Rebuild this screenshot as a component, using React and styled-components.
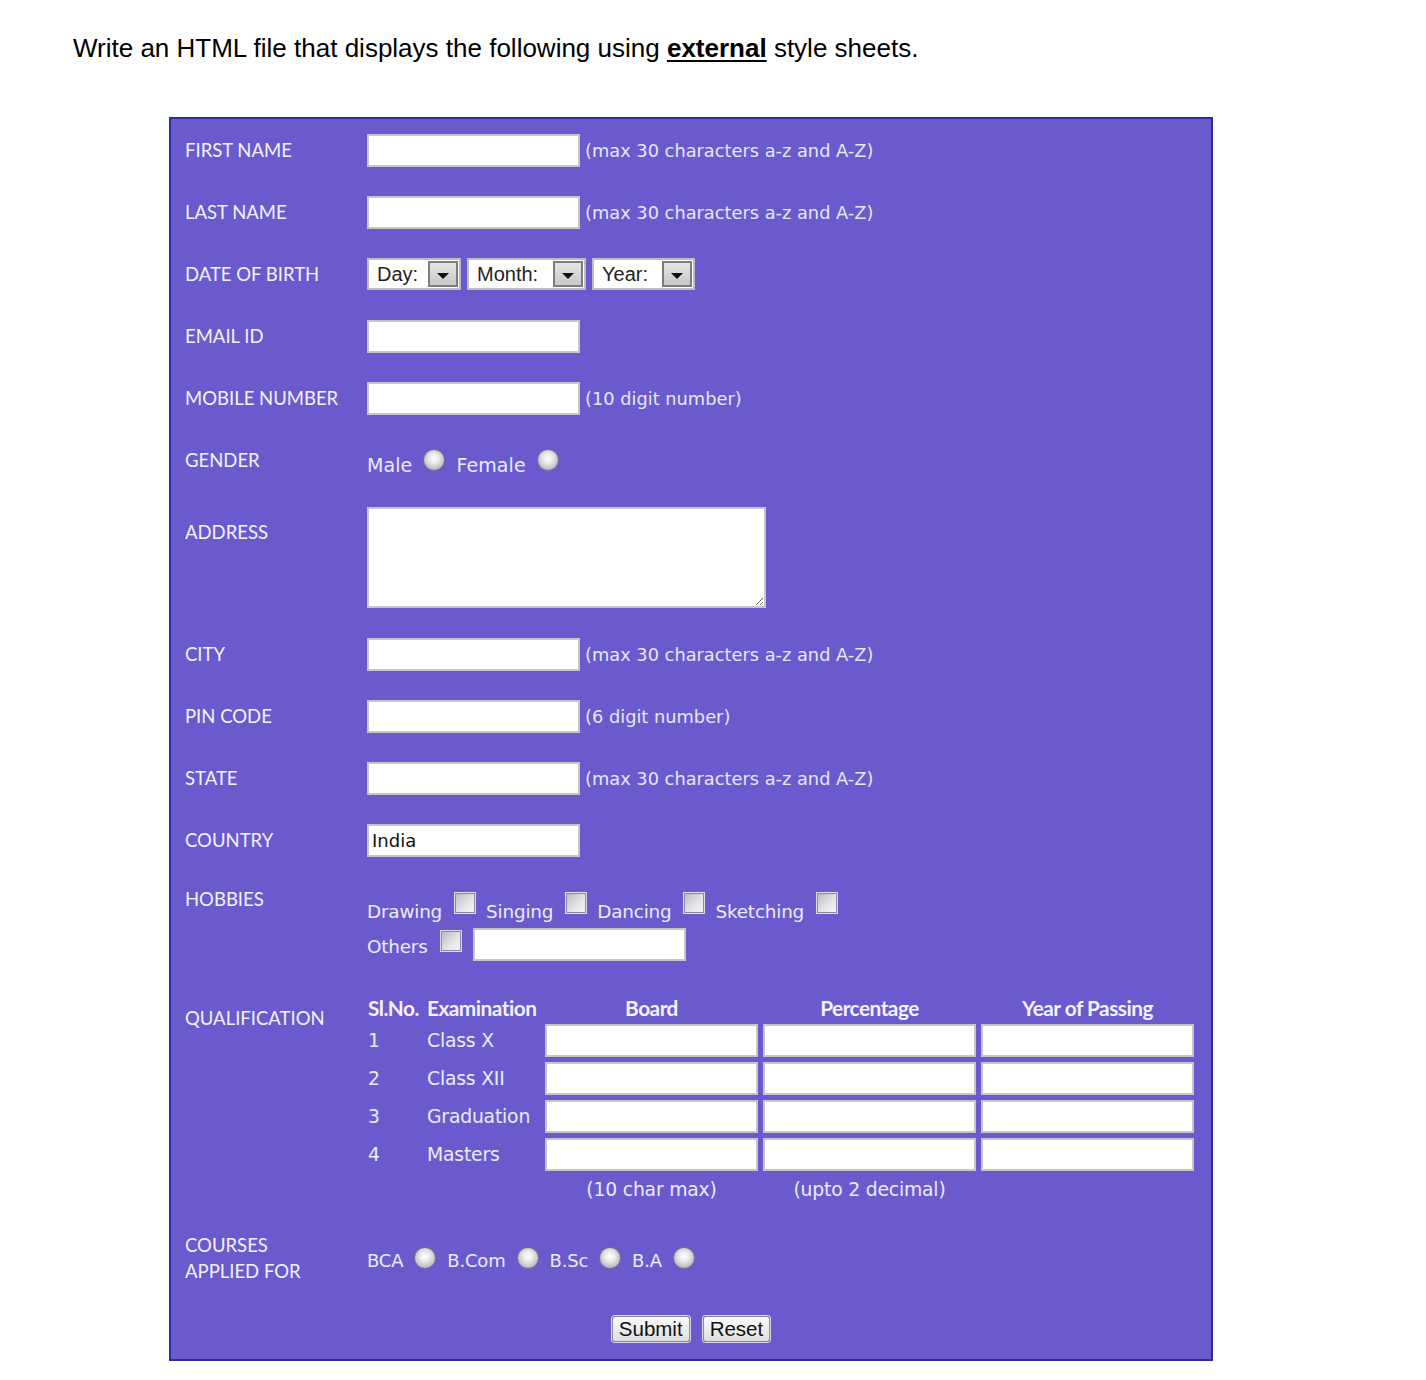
import React from "react";
import styled, { createGlobalStyle } from "styled-components";

const GlobalStyle = createGlobalStyle`
  body {
    margin: 0;
    background: #ffffff;
    font-family: "Liberation Sans", Arial, sans-serif;
  }
`;

const Page = styled.div`
  width: 1426px;
  padding: 33px 0 20px 73px;
  box-sizing: border-box;
`;

const Heading = styled.p`
  margin: 0 0 54px 0;
  font-family: "Liberation Sans", Arial, sans-serif;
  font-size: 26px;
  line-height: 30px;
  color: #000;
  b {
    text-decoration: underline;
    text-decoration-thickness: 2px;
    text-underline-offset: 3px;
  }
`;

const FormBox = styled.form`
  margin-left: 96px;
  width: 1044px;
  box-sizing: border-box;
  border: 2px solid #2c2ca0;
  background: #6a5acd;
  padding: 0 14px 17px 14px;
`;

const Row = styled.div`
  display: grid;
  grid-template-columns: 182px 1fr;
  align-items: ${({ top }) => (top ? "start" : "center")};
  height: ${({ h }) => h}px;
  box-sizing: border-box;
`;

const Label = styled.div`
  font-family: Lato, "Open Sans", sans-serif;
  font-size: 18.5px;
  line-height: 26px;
  color: #f3f2ff;
  padding-top: ${({ pt }) => pt || 0}px;
`;

const Field = styled.div`
  display: flex;
  align-items: center;
  gap: ${({ gap }) => (gap === undefined ? 5 : gap)}px;
`;

const TextBox = styled.input`
  width: 213px;
  height: 33px;
  box-sizing: border-box;
  border: 2px solid #c6c6c6;
  background: #fff;
  margin: 0;
  padding: 0 3px;
  font-family: "DejaVu Sans", sans-serif;
  font-size: 18px;
  color: #111;
  outline: none;
`;

const Hint = styled.span`
  font-family: "DejaVu Sans", sans-serif;
  font-size: 17.8px;
  color: #e8e6fb;
  white-space: nowrap;
`;

const Choice = styled.span`
  font-family: "DejaVu Sans", sans-serif;
  font-size: ${({ size }) => size || 19}px;
  letter-spacing: ${({ size }) => (size && size < 18.5 ? -0.2 : 0.1)}px;
  color: #ecebff;
  white-space: nowrap;
  position: relative;
  top: ${({ drop }) => (drop === undefined ? 5 : drop)}px;
`;

const Radio = styled.input.attrs({ type: "radio" })`
  appearance: none;
  width: 22px;
  height: 22px;
  margin: 0;
  border-radius: 50%;
  border: 1px solid #767684;
  background: radial-gradient(circle at 50% 42%, #ffffff 0%, #ececec 30%, #c0c0c6 68%, #96969e 100%);
  box-sizing: border-box;
  flex: none;
`;

const Check = styled.input.attrs({ type: "checkbox" })`
  appearance: none;
  width: 22px;
  height: 22px;
  margin: 0;
  border: 1px solid #dedee2;
  box-shadow: inset 0 0 0 1px #8c8c98;
  background: linear-gradient(135deg, #b6b6c2 0%, #e6e6ea 60%, #f6f6f8 100%);
  box-sizing: border-box;
  flex: none;
  position: relative;
  top: -3px;
`;

const SelectBox = styled.div`
  display: flex;
  align-items: center;
  justify-content: space-between;
  width: ${({ w }) => w}px;
  height: 32px;
  box-sizing: border-box;
  border: 2px solid #bcbcbc;
  background: #fff;
  padding: 0 1px 0 8px;
  font-family: "Liberation Sans", Arial, sans-serif;
  font-size: 20px;
  color: #222;
`;

const Arrow = styled.span`
  display: flex;
  align-items: center;
  justify-content: center;
  width: 30px;
  height: 26px;
  box-sizing: border-box;
  border: 2px solid #7c7c7c;
  background: linear-gradient(#e4e4e4, #c8c8c8);
  &::after {
    content: "";
    margin-top: 4px;
    border-left: 6px solid transparent;
    border-right: 6px solid transparent;
    border-top: 6px solid #111;
  }
`;

const AddressBox = styled.textarea`
  width: 399px;
  height: 101px;
  box-sizing: border-box;
  border: 2px solid #c6c6c6;
  margin: 16px 0 0 0;
  background: #fff;
  outline: none;
`;

const Lines = styled.div`
  display: flex;
  flex-direction: column;
  gap: 2px;
  padding-top: 17px;
`;

const Line = styled.div`
  display: flex;
  align-items: center;
  height: 36px;
  gap: ${({ gap }) => gap}px;
`;

const Pair = styled.span`
  display: flex;
  align-items: center;
  gap: 12px;
`;

const Grid = styled.div`
  display: grid;
  grid-template-columns: 54px 113px 213px 213px 213px;
  grid-auto-rows: 33px;
  grid-template-rows: 24px;
  column-gap: 5px;
  row-gap: 5px;
  margin-top: 15px;
  margin-left: 1px;
  align-items: center;
`;

const HeadCell = styled.div`
  font-family: Lato, "Open Sans", sans-serif;
  font-weight: 700;
  font-size: 20.8px;
  letter-spacing: -0.5px;
  color: #f3f2ff;
  text-align: ${({ center }) => (center ? "center" : "left")};
  white-space: nowrap;
`;

const Cell = styled.div`
  font-family: "DejaVu Sans", sans-serif;
  font-size: 18.8px;
  letter-spacing: -0.2px;
  color: #ecebff;
  white-space: nowrap;
  text-align: ${({ center }) => (center ? "center" : "left")};
`;

const HintRow = styled.div`
  display: grid;
  grid-template-columns: 54px 113px 213px 213px 213px;
  column-gap: 5px;
  margin-left: 1px;
  height: 26px;
  margin-top: 5px;
  align-items: center;
`;

const Buttons = styled.div`
  display: flex;
  justify-content: center;
  gap: 13px;
  padding-top: 24px;
`;

const Button = styled.button`
  height: 26px;
  padding: 0 6px;
  border: 1px solid #8a8a8a;
  border-radius: 3px;
  background: linear-gradient(#fbfbfb, #dedede);
  font-family: "Liberation Sans", Arial, sans-serif;
  font-size: 20.5px;
  line-height: 22px;
  color: #111;
  box-shadow: 0 0 0 1px #d8d8e8;
`;

const simple = [
  ["FIRST NAME", "(max 30 characters a-z and A-Z)"],
  ["LAST NAME", "(max 30 characters a-z and A-Z)"],
];

const lower = [
  ["CITY", "(max 30 characters a-z and A-Z)"],
  ["PIN CODE", "(6 digit number)"],
  ["STATE", "(max 30 characters a-z and A-Z)"],
];

const hobbies = ["Drawing", "Singing", "Dancing", "Sketching"];
const exams = ["Class X", "Class XII", "Graduation", "Masters"];
const courses = ["BCA", "B.Com", "B.Sc", "B.A"];

function App() {
  return (
    <>
      <GlobalStyle />
      <Page>
        <Heading>
          Write an HTML file that displays the following using <b>external</b> style sheets.
        </Heading>
        <FormBox onSubmit={(e) => e.preventDefault()}>
          {simple.map(([label, hint]) => (
            <Row h={62} key={label}>
              <Label>{label}</Label>
              <Field>
                <TextBox />
                <Hint>{hint}</Hint>
              </Field>
            </Row>
          ))}
          <Row h={62}>
            <Label>DATE OF BIRTH</Label>
            <Field gap={6}>
              <SelectBox w={94}>Day:<Arrow /></SelectBox>
              <SelectBox w={119}>Month:<Arrow /></SelectBox>
              <SelectBox w={103}>Year:<Arrow /></SelectBox>
            </Field>
          </Row>
          <Row h={62}>
            <Label>EMAIL ID</Label>
            <Field>
              <TextBox />
            </Field>
          </Row>
          <Row h={62}>
            <Label>MOBILE NUMBER</Label>
            <Field>
              <TextBox />
              <Hint>(10 digit number)</Hint>
            </Field>
          </Row>
          <Row h={62}>
            <Label>GENDER</Label>
            <Field gap={11}>
              <Choice>Male</Choice>
              <Radio name="gender" />
              <Choice>Female</Choice>
              <Radio name="gender" />
            </Field>
          </Row>
          <Row h={132} top>
            <Label pt={28}>ADDRESS</Label>
            <div>
              <AddressBox />
            </div>
          </Row>
          {lower.map(([label, hint]) => (
            <Row h={62} key={label}>
              <Label>{label}</Label>
              <Field>
                <TextBox />
                <Hint>{hint}</Hint>
              </Field>
            </Row>
          ))}
          <Row h={62}>
            <Label>COUNTRY</Label>
            <Field>
              <TextBox defaultValue="India" />
            </Field>
          </Row>
          <Row h={109} top>
            <Label pt={15}>HOBBIES</Label>
            <Lines>
              <Line gap={10}>
                {hobbies.map((h) => (
                  <Pair key={h}>
                    <Choice size={18.4}>{h}</Choice>
                    <Check />
                  </Pair>
                ))}
              </Line>
              <Line gap={11}>
                <Pair>
                  <Choice size={18.4} drop={2}>Others</Choice>
                  <Check />
                </Pair>
                <TextBox />
              </Line>
            </Lines>
          </Row>
          <Row h={243} top>
            <Label pt={25}>QUALIFICATION</Label>
            <div>
              <Grid>
                <HeadCell>Sl.No.</HeadCell>
                <HeadCell>Examination</HeadCell>
                <HeadCell center>Board</HeadCell>
                <HeadCell center>Percentage</HeadCell>
                <HeadCell center>Year of Passing</HeadCell>
                {exams.map((exam, i) => (
                  <React.Fragment key={exam}>
                    <Cell>{i + 1}</Cell>
                    <Cell>{exam}</Cell>
                    <TextBox />
                    <TextBox />
                    <TextBox />
                  </React.Fragment>
                ))}
              </Grid>
              <HintRow>
                <span />
                <span />
                <Cell center>(10 char max)</Cell>
                <Cell center>(upto 2 decimal)</Cell>
              </HintRow>
            </div>
          </Row>
          <Row h={69}>
            <Label>
              COURSES
              <br />
              APPLIED FOR
            </Label>
            <Field gap={11}>
              {courses.map((c) => (
                <React.Fragment key={c}>
                  <Choice size={18} drop={3}>{c}</Choice>
                  <Radio name="course" />
                </React.Fragment>
              ))}
            </Field>
          </Row>
          <Buttons>
            <Button type="submit">Submit</Button>
            <Button type="reset">Reset</Button>
          </Buttons>
        </FormBox>
      </Page>
    </>
  );
}

export default App;
